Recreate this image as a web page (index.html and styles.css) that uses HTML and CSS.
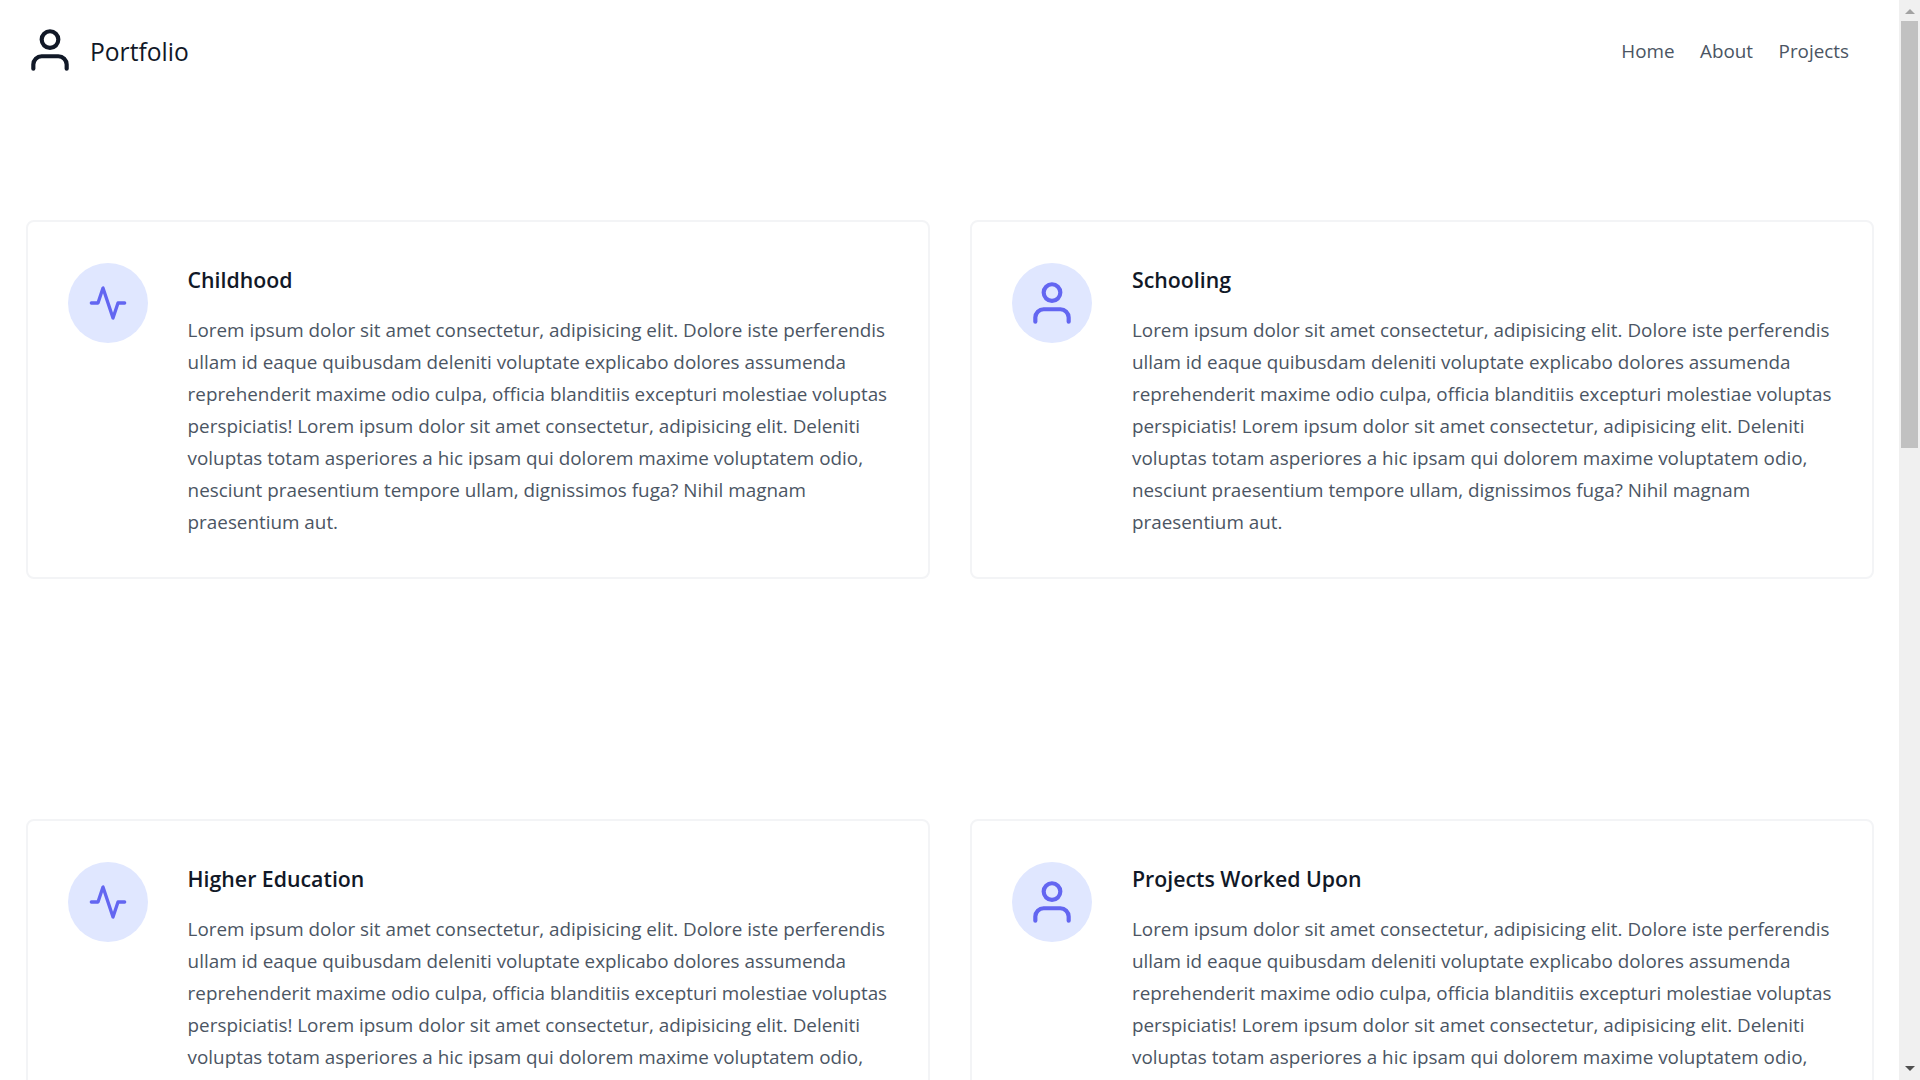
FILE: index.html
```html
<!DOCTYPE html>
<html lang="en">
<head>
<meta charset="utf-8">
<title>Portfolio</title>
<link rel="stylesheet" href="styles.css">
</head>
<body>
<div class="page">
<header class="site-header">
  <a class="brand" href="#">
    <svg class="brand-icon" viewBox="0 0 24 24"><path d="M20 21v-2a4 4 0 0 0-4-4H8a4 4 0 0 0-4 4v2"/><circle cx="12" cy="7" r="4"/></svg>
    <span class="brand-name">Portfolio</span>
  </a>
  <nav class="nav">
    <a href="#">Home</a>
    <a href="#">About</a>
    <a href="#">Projects</a>
  </nav>
</header>
<main>
  <section class="row">
    <article class="card">
      <div class="badge"><svg class="icon-activity" viewBox="0 0 24 24"><path d="M22 12h-4l-3 9L9 3l-3 9H2"/></svg></div>
      <div class="body">
        <h2>Childhood</h2>
        <p>Lorem ipsum dolor sit amet consectetur, adipisicing elit. Dolore iste perferendis ullam id eaque quibusdam deleniti voluptate explicabo dolores assumenda reprehenderit maxime odio culpa, officia blanditiis excepturi molestiae voluptas perspiciatis! Lorem ipsum dolor sit amet consectetur, adipisicing elit. Deleniti voluptas totam asperiores a hic ipsam qui dolorem maxime voluptatem odio, nesciunt praesentium tempore ullam, dignissimos fuga? Nihil magnam praesentium aut.</p>
      </div>
    </article>
    <article class="card">
      <div class="badge"><svg class="icon-user" viewBox="0 0 24 24"><path d="M20 21v-2a4 4 0 0 0-4-4H8a4 4 0 0 0-4 4v2"/><circle cx="12" cy="7" r="4"/></svg></div>
      <div class="body">
        <h2>Schooling</h2>
        <p>Lorem ipsum dolor sit amet consectetur, adipisicing elit. Dolore iste perferendis ullam id eaque quibusdam deleniti voluptate explicabo dolores assumenda reprehenderit maxime odio culpa, officia blanditiis excepturi molestiae voluptas perspiciatis! Lorem ipsum dolor sit amet consectetur, adipisicing elit. Deleniti voluptas totam asperiores a hic ipsam qui dolorem maxime voluptatem odio, nesciunt praesentium tempore ullam, dignissimos fuga? Nihil magnam praesentium aut.</p>
      </div>
    </article>
  </section>
  <section class="row">
    <article class="card">
      <div class="badge"><svg class="icon-activity" viewBox="0 0 24 24"><path d="M22 12h-4l-3 9L9 3l-3 9H2"/></svg></div>
      <div class="body">
        <h2>Higher Education</h2>
        <p>Lorem ipsum dolor sit amet consectetur, adipisicing elit. Dolore iste perferendis ullam id eaque quibusdam deleniti voluptate explicabo dolores assumenda reprehenderit maxime odio culpa, officia blanditiis excepturi molestiae voluptas perspiciatis! Lorem ipsum dolor sit amet consectetur, adipisicing elit. Deleniti voluptas totam asperiores a hic ipsam qui dolorem maxime voluptatem odio, nesciunt praesentium tempore ullam, dignissimos fuga? Nihil magnam praesentium aut.</p>
      </div>
    </article>
    <article class="card">
      <div class="badge"><svg class="icon-user" viewBox="0 0 24 24"><path d="M20 21v-2a4 4 0 0 0-4-4H8a4 4 0 0 0-4 4v2"/><circle cx="12" cy="7" r="4"/></svg></div>
      <div class="body">
        <h2>Projects Worked Upon</h2>
        <p>Lorem ipsum dolor sit amet consectetur, adipisicing elit. Dolore iste perferendis ullam id eaque quibusdam deleniti voluptate explicabo dolores assumenda reprehenderit maxime odio culpa, officia blanditiis excepturi molestiae voluptas perspiciatis! Lorem ipsum dolor sit amet consectetur, adipisicing elit. Deleniti voluptas totam asperiores a hic ipsam qui dolorem maxime voluptatem odio, nesciunt praesentium tempore ullam, dignissimos fuga? Nihil magnam praesentium aut.</p>
      </div>
    </article>
  </section>
</main>
</div>
<div class="scrollbar" aria-hidden="true">
  <span class="arrow-up"></span>
  <span class="thumb"></span>
  <span class="arrow-down"></span>
</div>
</body>
</html>
```
FILE: styles.css
```css
* { box-sizing: border-box; }
html, body { height: 100%; overflow: hidden; }
body { margin: 0; display: flex; font-family: "Open Sans", "Noto Sans", sans-serif; background: #fff; color: #4b5563; }
a { color: inherit; text-decoration: none; }
.page { flex: 1; min-width: 0; height: 100vh; overflow: hidden; }
.scrollbar { flex: none; width: 21px; height: 100vh; background: #f0f0f0; display: flex; flex-direction: column; align-items: center; padding: 9px 0; }
.arrow-up { width: 0; height: 0; border-left: 5px solid transparent; border-right: 5px solid transparent; border-bottom: 5px solid #a3a3a3; }
.thumb { width: 17px; height: 427px; margin-top: 7px; background: #c1c1c1; }
.arrow-down { width: 0; height: 0; margin-top: auto; border-left: 5px solid transparent; border-right: 5px solid transparent; border-top: 5px solid #505050; }
.site-header { display: flex; align-items: center; justify-content: space-between; padding: 25px 50px 25px 25px; height: 100px; }
.brand { display: flex; align-items: center; color: #111827; }
.brand-icon { width: 50px; height: 50px; fill: none; stroke: currentColor; stroke-width: 2; stroke-linecap: round; stroke-linejoin: round; }
.brand-name { margin-left: 15px; padding-top: 2px; font-size: 24.6px; }
.nav { display: flex; gap: 25.5px; padding-top: 2px; font-size: 18.85px; }
main { padding: 0 25px 0 25.6px; }
.row { display: grid; grid-template-columns: 1fr 1fr; gap: 40.4px; padding: 120px 0; }
.card { display: flex; border: 2px solid #f3f4f6; border-radius: 8px; padding: 41px 40px 39px; background: #fff; }
.badge { flex: none; width: 80px; height: 80px; border-radius: 50%; background: #e0e7ff; color: #6366f1; display: flex; align-items: center; justify-content: center; margin-right: 40px; }
.badge svg { fill: none; stroke: currentColor; stroke-width: 2; stroke-linecap: round; stroke-linejoin: round; }
.icon-activity { width: 40px; height: 40px; }
.icon-user { width: 50px; height: 50px; }
.body { flex: 1; min-width: 0; padding-top: 1px; }
h2 { margin: 0 0 18px; font-size: 21.3px; line-height: 32px; font-weight: 600; color: #111827; }
p { margin: 0 -12px 0 0; font-size: 18.85px; line-height: 32px; }
```
